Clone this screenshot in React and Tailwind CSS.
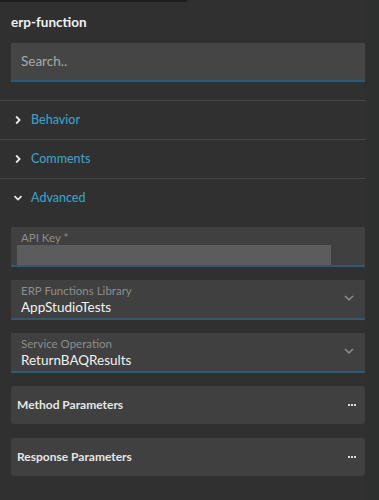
import React from 'react';

const font = { fontFamily: 'Lato, "Noto Sans", sans-serif' };

function Chevron({ open }) {
  return (
    <svg width="10" height="10" viewBox="0 0 10 10" className="shrink-0">
      {open ? (
        <path d="M1.5 3.2 L5 6.6 L8.5 3.2" fill="none" stroke="#e8e8e8" strokeWidth="1.8" />
      ) : (
        <path d="M3.2 1.5 L6.6 5 L3.2 8.5" fill="none" stroke="#e8e8e8" strokeWidth="1.8" />
      )}
    </svg>
  );
}

function Section({ label, open }) {
  return (
    <div className="flex items-center h-[39px] border-t border-[#464646] pl-[13px] gap-[8px]">
      <Chevron open={open} />
      <span className="text-[12.5px] text-[#3b9fc6] font-medium">{label}</span>
    </div>
  );
}

function SelectField({ label, value }) {
  return (
    <div className="relative h-[40px] bg-[#404040] border-b-2 border-[#2c5a75] px-[10px] pt-[4px]">
      <div className="text-[11.5px] leading-[14px] text-[#8d8d8d]">{label}</div>
      <div className="text-[13.5px] leading-[18px] text-[#f2f2f2]">{value}</div>
      <svg width="10" height="8" viewBox="0 0 10 8" className="absolute right-[11px] top-[14px]">
        <path d="M1 2 L5 5.8 L9 2" fill="none" stroke="#8a8a8a" strokeWidth="1.6" />
      </svg>
    </div>
  );
}

function ParamBox({ label }) {
  return (
    <div className="flex items-center justify-between h-[38px] bg-[#404040] rounded-[3px] pl-[6px] pr-[9px]">
      <span className="text-[12px] font-bold text-[#e6e6e6]">{label}</span>
      <span className="flex gap-[1px]">
        <span className="w-[2px] h-[2px] bg-[#dcdcdc]" />
        <span className="w-[2px] h-[2px] bg-[#dcdcdc]" />
        <span className="w-[2px] h-[2px] bg-[#dcdcdc]" />
      </span>
    </div>
  );
}

export default function App() {
  return (
    <div className="w-[379px] h-[500px] bg-[#303030] relative overflow-hidden" style={font}>
      <div className="absolute left-0 top-0 w-[187px] h-[2px] bg-[#1e1e1e]" />
      <div className="absolute right-0 top-0 w-[14px] h-full bg-[#2e3030]" />

      <div className="relative">
        <div className="h-[43px] flex items-center pl-[11px] pt-[2px]">
          <span className="text-[13.5px] font-bold text-[#f0f0f0]">erp-function</span>
        </div>

        <div className="mx-[11px] w-[354px] h-[39px] bg-[#454545] border-b-2 border-[#2c5a75] flex items-center pl-[10px]">
          <span className="text-[13.5px] text-[#a9a9a9]">Search..</span>
        </div>

        <div className="mt-[18px] w-[366px]">
          <Section label="Behavior" />
          <Section label="Comments" />
          <Section label="Advanced" open />
        </div>

        <div className="mx-[11px] w-[354px] mt-[10px] flex flex-col gap-[13px]">
          <div className="relative h-[40px] bg-[#404040] border-b-2 border-[#2c5a75] px-[6px] pt-[4px]">
            <div className="text-[11.5px] leading-[14px] text-[#8d8d8d] pl-[4px]">API Key *</div>
            <div className="h-[20px] w-[314px] bg-[#5c5c5c]" />
          </div>
          <SelectField label="ERP Functions Library" value="AppStudioTests" />
          <SelectField label="Service Operation" value="ReturnBAQResults" />
        </div>

        <div className="mx-[11px] w-[354px] mt-[13px] flex flex-col gap-[14px]">
          <ParamBox label="Method Parameters" />
          <ParamBox label="Response Parameters" />
        </div>
      </div>
    </div>
  );
}
